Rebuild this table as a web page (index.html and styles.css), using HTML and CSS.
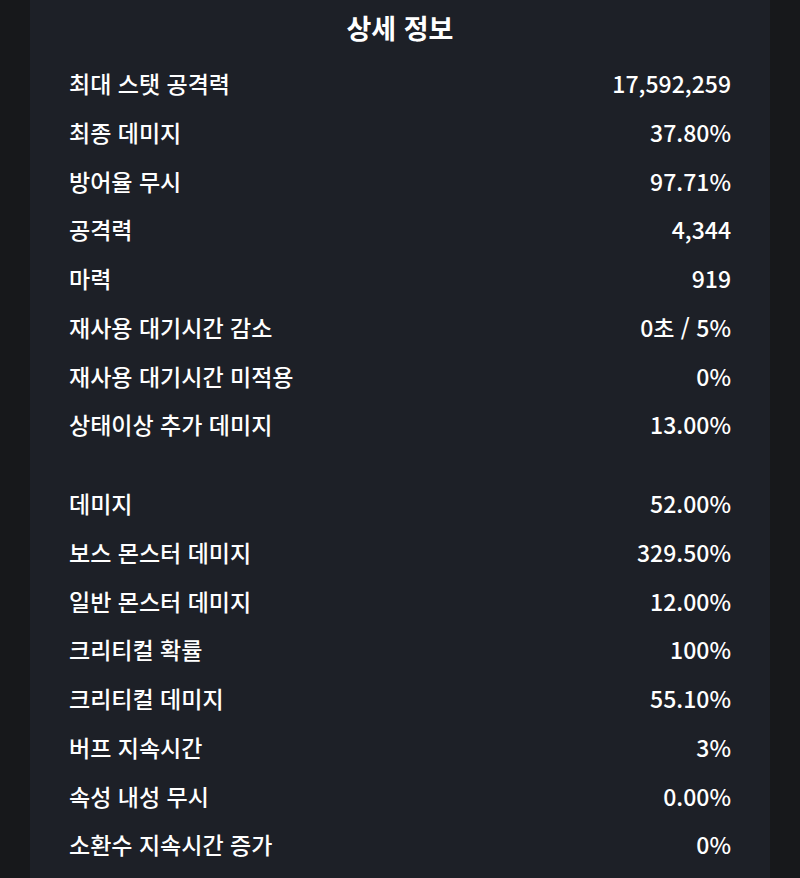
FILE: index.html
```html
<!DOCTYPE html>
<html lang="ko">
<head>
  <meta charset="UTF-8">
  <meta name="viewport" content="width=device-width, initial-scale=1.0">
  <title>상세 정보</title>
  <link rel="stylesheet" href="styles.css">
</head>
<body>
  <div class="panel">
    <h2 class="title">상세 정보</h2>

    <div class="group">
      <div class="row"><span>최대 스탯 공격력</span><span>17,592,259</span></div>
      <div class="row"><span>최종 데미지</span><span>37.80%</span></div>
      <div class="row"><span>방어율 무시</span><span>97.71%</span></div>
      <div class="row"><span>공격력</span><span>4,344</span></div>
      <div class="row"><span>마력</span><span>919</span></div>
      <div class="row"><span>재사용 대기시간 감소</span><span>0초 / 5%</span></div>
      <div class="row"><span>재사용 대기시간 미적용</span><span>0%</span></div>
      <div class="row"><span>상태이상 추가 데미지</span><span>13.00%</span></div>
    </div>

    <div class="group">
      <div class="row"><span>데미지</span><span>52.00%</span></div>
      <div class="row"><span>보스 몬스터 데미지</span><span>329.50%</span></div>
      <div class="row"><span>일반 몬스터 데미지</span><span>12.00%</span></div>
      <div class="row"><span>크리티컬 확률</span><span>100%</span></div>
      <div class="row"><span>크리티컬 데미지</span><span>55.10%</span></div>
      <div class="row"><span>버프 지속시간</span><span>3%</span></div>
      <div class="row"><span>속성 내성 무시</span><span>0.00%</span></div>
      <div class="row"><span>소환수 지속시간 증가</span><span>0%</span></div>
    </div>
  </div>
</body>
</html>
```
FILE: styles.css
```css
/* General */
body {
  margin: 0;
  background: #17181b;
  color: #ffffff;
  font-family: "Noto Sans CJK KR", "Noto Sans", sans-serif;
}

/* Panel */
.panel {
  margin: 0 30px;
  min-height: 878px;
  box-sizing: border-box;
  background: #1d2027;
  padding: 4px 39px 0;
}

.title {
  margin: 0 0 7px;
  font-size: 27px;
  font-weight: 700;
  line-height: 48px;
  text-align: center;
}

/* Stat rows */
.group + .group {
  margin-top: 30px;
}

.row {
  display: flex;
  justify-content: space-between;
  font-size: 23px;
  font-weight: 500;
  line-height: 48.75px;
}
```
